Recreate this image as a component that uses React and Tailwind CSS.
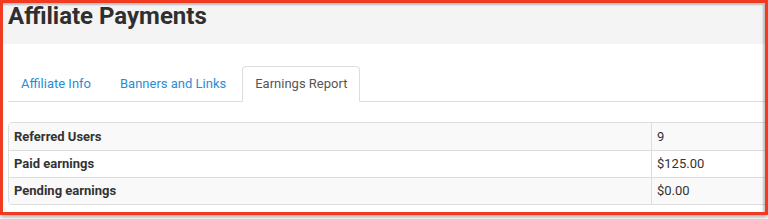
const TABS = [
  { label: "Affiliate Info", active: false },
  { label: "Banners and Links", active: false },
  { label: "Earnings Report", active: true },
];

const ROWS = [
  { label: "Referred Users", value: "9" },
  { label: "Paid earnings", value: "$125.00" },
  { label: "Pending earnings", value: "$0.00" },
];

export default function App() {
  return (
    <div className="w-[768px] h-[219px] bg-white font-['Roboto',sans-serif] text-[#333]">
      <div className="relative h-[215px] border-[3px] border-[#f03a22] bg-white overflow-hidden shadow-[0_2px_4px_rgba(0,0,0,0.35)]">
        <div className="h-[41px] bg-[#f4f4f4] px-[5px]">
          <h1 className="text-[24px] leading-[26px] font-bold text-[#2f2f2f]">
            Affiliate Payments
          </h1>
        </div>

        <ul className="mt-[22px] ml-[5px] flex border-b border-[#dddddd]">
          {TABS.map((tab) => (
            <li key={tab.label} className="-mb-px mr-[3px]">
              <a
                className={`flex h-[36px] items-center px-[12px] text-[13px] rounded-t-[4px] border ${
                  tab.active
                    ? "border-[#dddddd] border-b-white bg-white text-[#555]"
                    : "border-transparent text-[#2a8dd4]"
                }`}
              >
                {tab.label}
              </a>
            </li>
          ))}
        </ul>

        <div className="mt-[20px] ml-[5px] w-[780px] rounded-[4px] border border-[#dddddd] overflow-hidden text-[13px]">
          {ROWS.map((row, i) => (
            <div
              key={row.label}
              className={`flex h-[27px] ${i > 0 ? "border-t border-[#dddddd]" : "h-[26px]"} ${
                i % 2 === 0 ? "bg-[#f9f9f9]" : "bg-white"
              }`}
            >
              <div className="w-[643px] border-r border-[#dddddd] pl-[5px] flex items-center font-bold">
                {row.label}
              </div>
              <div className="pl-[5px] flex items-center">{row.value}</div>
            </div>
          ))}
        </div>

        <div className="pointer-events-none absolute inset-0 shadow-[inset_-2px_2px_2px_rgba(0,0,0,0.22)]" />
      </div>
    </div>
  );
}
